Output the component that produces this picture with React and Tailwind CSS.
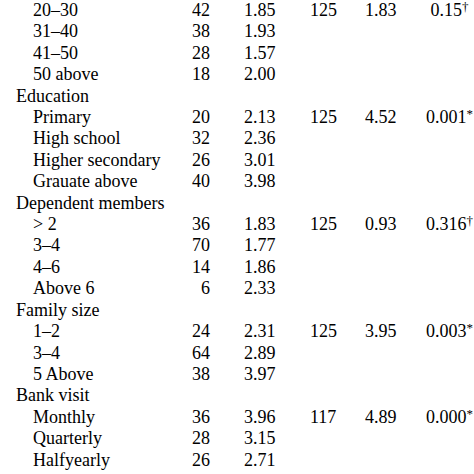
const ROWS = [
  { label: '20–30', sub: true, n: '42', mean: '1.85', df: '125', f: '1.83', p: '0.15', mark: '†' },
  { label: '31–40', sub: true, n: '38', mean: '1.93' },
  { label: '41–50', sub: true, n: '28', mean: '1.57' },
  { label: '50 above', sub: true, n: '18', mean: '2.00' },
  { label: 'Education' },
  { label: 'Primary', sub: true, n: '20', mean: '2.13', df: '125', f: '4.52', p: '0.001', mark: '*' },
  { label: 'High school', sub: true, n: '32', mean: '2.36' },
  { label: 'Higher secondary', sub: true, n: '26', mean: '3.01' },
  { label: 'Grauate above', sub: true, n: '40', mean: '3.98' },
  { label: 'Dependent members' },
  { label: '> 2', sub: true, n: '36', mean: '1.83', df: '125', f: '0.93', p: '0.316', mark: '†' },
  { label: '3–4', sub: true, n: '70', mean: '1.77' },
  { label: '4–6', sub: true, n: '14', mean: '1.86' },
  { label: 'Above 6', sub: true, n: '6', mean: '2.33' },
  { label: 'Family size' },
  { label: '1–2', sub: true, n: '24', mean: '2.31', df: '125', f: '3.95', p: '0.003', mark: '*' },
  { label: '3–4', sub: true, n: '64', mean: '2.89' },
  { label: '5 Above', sub: true, n: '38', mean: '3.97' },
  { label: 'Bank visit' },
  { label: 'Monthly', sub: true, n: '36', mean: '3.96', df: '117', f: '4.89', p: '0.000', mark: '*' },
  { label: 'Quarterly', sub: true, n: '28', mean: '3.15' },
  { label: 'Halfyearly', sub: true, n: '26', mean: '2.71' },
];

export default function App() {
  return (
    <div className="w-[474px] h-[474px] overflow-hidden bg-white text-black font-['Liberation_Serif',serif] text-[18px] leading-[21.4px]">
      {ROWS.map((r, i) => (
        <div key={i} className="flex whitespace-nowrap">
          <div className={`w-[170px] shrink-0 ${r.sub ? 'pl-[33px]' : 'pl-[16px]'}`}>{r.label}</div>
          <div className="w-[40px] shrink-0 text-right">{r.n}</div>
          <div className="ml-[34px] w-[66px] shrink-0">{r.mean}</div>
          <div className="w-[55px] shrink-0">{r.df}</div>
          <div className="w-[60px] shrink-0">{r.f}</div>
          <div className="w-[49px] shrink-0 text-center">
            {r.p}
            {r.mark && <sup className="text-[13px] top-[-0.4em]">{r.mark}</sup>}
          </div>
        </div>
      ))}
    </div>
  );
}
